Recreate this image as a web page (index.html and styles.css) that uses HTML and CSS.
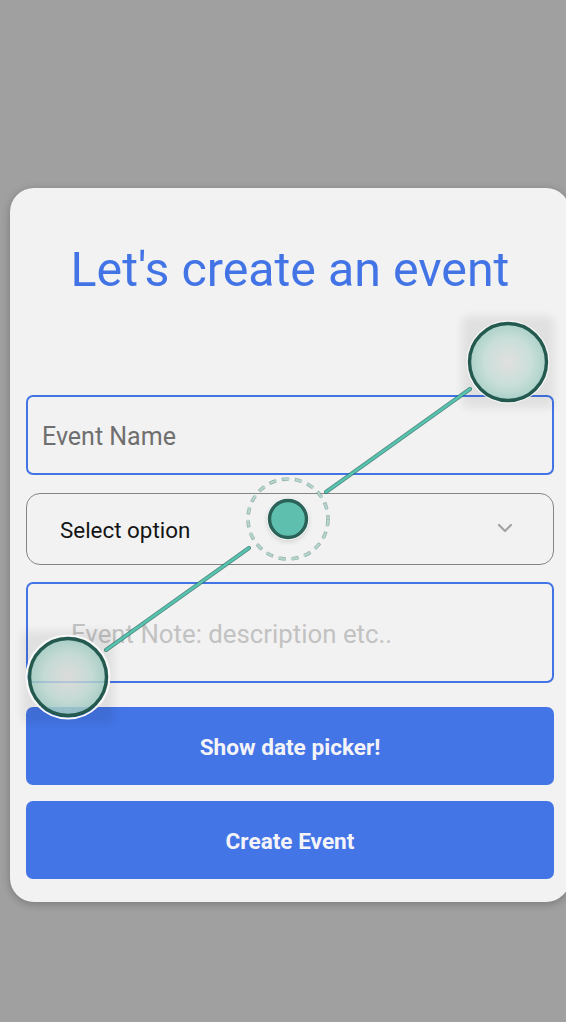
FILE: index.html
```html
<!DOCTYPE html>
<html lang="en">
<head>
<meta charset="utf-8">
<title>Create event</title>
<link rel="stylesheet" href="styles.css">
</head>
<body>
<div class="screen">
  <div class="card">
    <h1 class="title">Let's create an event</h1>
    <div class="field field-name"><span class="placeholder">Event Name</span></div>
    <div class="select">
      <span class="select-text">Select option</span>
      <svg class="chevron" width="16" height="10" viewBox="0 0 16 10"><path d="M2 2 L8 8 L14 2" fill="none" stroke="#a3a3a3" stroke-width="2.2" stroke-linecap="round" stroke-linejoin="round"/></svg>
    </div>
    <div class="field field-note"><span class="placeholder light">Event Note: description etc..</span></div>
    <button class="btn">Show date picker!</button>
    <button class="btn btn-second">Create Event</button>
  </div>

  <svg class="gesture" width="566" height="1022" viewBox="0 0 566 1022">
    <defs>
      <filter id="blur" x="-50%" y="-50%" width="200%" height="200%"><feGaussianBlur stdDeviation="5"/></filter>
      <filter id="soft" x="-50%" y="-50%" width="200%" height="200%"><feGaussianBlur stdDeviation="2.5"/></filter>
      <radialGradient id="big" cx="50%" cy="50%" r="50%">
        <stop offset="0" stop-color="#dadada" stop-opacity="0.8"/>
        <stop offset="0.6" stop-color="#bfd9d2" stop-opacity="0.8"/>
        <stop offset="1" stop-color="#9dcbc0" stop-opacity="0.85"/>
      </radialGradient>
    </defs>
    <!-- shadow squares -->
    <rect x="462" y="316" width="92" height="92" rx="6" fill="#000" opacity="0.07" filter="url(#blur)"/>
    <rect x="22" y="631" width="92" height="92" rx="6" fill="#000" opacity="0.07" filter="url(#blur)"/>
    <!-- lines -->
    <line x1="470" y1="389" x2="326" y2="492" stroke="#2f7467" stroke-width="4" stroke-linecap="round" opacity="0.8"/>
    <line x1="470" y1="389" x2="326" y2="492" stroke="#55c4b1" stroke-width="2.4" stroke-linecap="round"/>
    <line x1="249" y1="548" x2="106" y2="650" stroke="#2f7467" stroke-width="4" stroke-linecap="round" opacity="0.8"/>
    <line x1="249" y1="548" x2="106" y2="650" stroke="#55c4b1" stroke-width="2.4" stroke-linecap="round"/>
    <!-- dashed ring -->
    <circle cx="288" cy="519" r="40" fill="none" stroke="#6f9c92" stroke-width="3.6" stroke-dasharray="7 6" opacity="0.7"/>
    <circle cx="288" cy="519" r="40" fill="none" stroke="#b8d6cf" stroke-width="2" stroke-dasharray="7 6" stroke-dashoffset="-0.8"/>
    <!-- small centre -->
    <circle cx="288" cy="521" r="21" fill="#000" opacity="0.12" filter="url(#soft)"/>
    <circle cx="288" cy="519" r="21" fill="#fbfbfb"/>
    <circle cx="288" cy="519" r="18.5" fill="#5fbfae" stroke="#2a6258" stroke-width="3.4"/>
    <!-- big circles -->
    <circle cx="508" cy="362" r="41.5" fill="#f8f8f8" fill-opacity="0.9"/>
    <circle cx="508" cy="362" r="38.5" fill="url(#big)" stroke="#23594f" stroke-width="3.4"/>
    <circle cx="68" cy="677" r="41.5" fill="none" stroke="#f8f8f8" stroke-width="2"/>
    <circle cx="68" cy="677" r="38.5" fill="url(#big)" stroke="#23594f" stroke-width="3.4"/>
  </svg>
</div>
</body>
</html>
```

FILE: styles.css
```css
* { box-sizing: border-box; }
html, body { margin: 0; padding: 0; }
body {
  background: #a0a0a1;
  font-family: Roboto, "Noto Sans", "Liberation Sans", sans-serif;
}
.screen {
  position: relative;
  width: 566px;
  height: 1022px;
  overflow: hidden;
  padding: 188px 0 0 10px;
}
.card {
  width: 560px;
  height: 714px;
  background: #f2f2f2;
  border-radius: 24px;
  padding: 52px 16px 0 16px;
  box-shadow: 0 2px 8px rgba(0,0,0,0.25);
  display: flex;
  flex-direction: column;
}
.title {
  margin: 0 0 95px 0;
  font-weight: 400;
  font-size: 48.3px;
  line-height: 60px;
  height: 60px;
  text-align: center;
  color: #4374e6;
  letter-spacing: 0;
  white-space: nowrap;
}
.field {
  border: 2px solid #4374e6;
  border-radius: 7px;
  display: flex;
  align-items: center;
}
.field-name {
  height: 80px;
  padding-left: 14px;
  padding-top: 3px;
}
.placeholder {
  font-size: 25px;
  color: #6f6f6f;
}
.placeholder.light { color: #c2c2c2; font-size: 25.8px; }
.select {
  margin-top: 18px;
  height: 72px;
  border: 1px solid #858585;
  border-radius: 14px;
  display: flex;
  align-items: center;
  justify-content: space-between;
  padding: 2px 40px 0 33px;
}
.select-text {
  font-size: 22.4px;
  color: #141414;
}
.chevron { display: block; margin-top: -4px; }
.field-note {
  margin-top: 17px;
  height: 101px;
  padding-left: 43px;
  padding-top: 2px;
}
.btn {
  margin-top: 24px;
  height: 78px;
  border: none;
  border-radius: 7px;
  background: #4475e6;
  color: #f4f4f8;
  font-family: Roboto, "Noto Sans", "Liberation Sans", sans-serif;
  font-weight: 700;
  font-size: 22.6px;
  width: 100%;
  padding: 2px 0 0 0;
}
.btn-second { margin-top: 16px; }
.gesture {
  position: absolute;
  left: 0;
  top: 0;
  pointer-events: none;
}
```
